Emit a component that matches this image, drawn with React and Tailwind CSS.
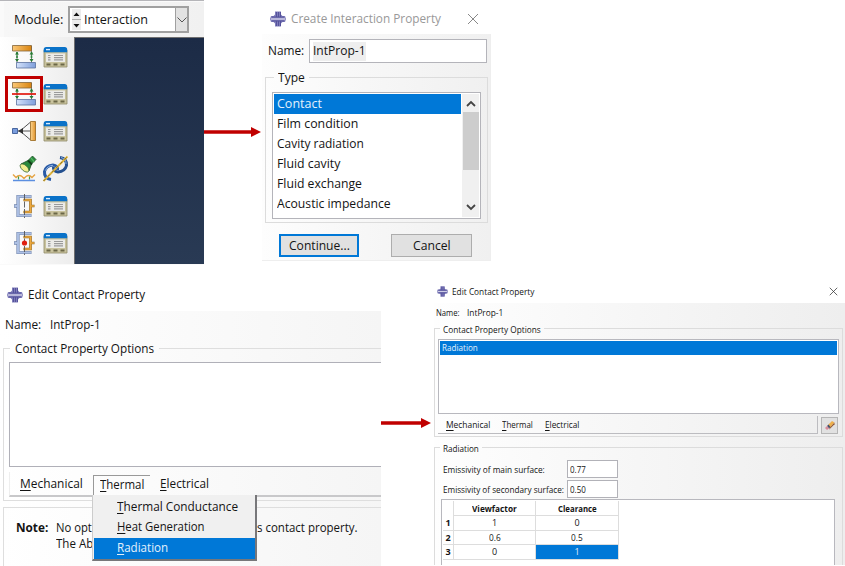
import { useLayoutEffect, useRef, useState } from "react";

/* Text run condensed or widened to an exact width. */
function T({ w, className = "", children }) {
  const ref = useRef(null);
  const [scale, setScale] = useState(1);
  useLayoutEffect(() => {
    setScale(w / ref.current.offsetWidth);
  }, [w]);
  return (
    <span className={`inline-block shrink-0 whitespace-nowrap ${className}`} style={{ width: w }}>
      <span ref={ref} className="inline-block origin-left" style={{ transform: `scaleX(${scale})` }}>
        {children}
      </span>
    </span>
  );
}

function Mnemonic({ text, w }) {
  return (
    <T w={w}>
      <span className="underline underline-offset-2">{text[0]}</span>
      {text.slice(1)}
    </T>
  );
}

function AppIcon({ className }) {
  return (
    <svg viewBox="0 0 16 16" className={className}>
      <path d="M5 .5h6v3l1.500 1.500H15l1 3-1 3h-2.500L11 12.500v3H5v-3L3.500 11H1L0 8l1-3h2.500L5 3.500z" fill="#807eba" />
      <path d="M6.500 1v5M8.500 1v5M10.500 1v5M6.500 10v5M8.500 10v5M10.500 10v5" stroke="#55529c" strokeWidth="1" />
      <path d="M2 6h12M2 10h12" stroke="#55529c" strokeWidth="1.200" />
      <path d="M1 8h14" stroke="#f1f0fa" strokeWidth="1" />
    </svg>
  );
}

function CloseIcon({ className }) {
  return (
    <svg viewBox="0 0 12 12" className={className} fill="none" stroke="currentColor">
      <path d="M1 1l10 10M11 1L1 11" />
    </svg>
  );
}

function Arrow({ width }) {
  return (
    <svg width={width} height="12" viewBox={`0 0 ${width} 12`} className="block">
      <path d={`M0 6H${width - 9}`} stroke="#c00000" strokeWidth="3.4" />
      <path d={`M${width - 10} 1L${width} 6l-${10} 5z`} fill="#c00000" />
    </svg>
  );
}

function ManagerIcon() {
  return (
    <svg width="25" height="22" viewBox="0 0 25 22">
      <path d="M1 4h23v17H1z" fill="#c8c29d" stroke="#8f8a68" strokeWidth=".8" />
      <path d="M.700 3.500q0-2.500 2.500-2.500h18.500q2.500 0 2.500 2.500V6.200H.700z" fill="#0a72c8" />
      <path d="M3 3.600h4" stroke="#d8ecff" strokeWidth="1.400" />
      <path d="M3 7.500h19v8.500H3z" fill="#ebebe8" />
      <path d="M5 9.500h2.500M5 11.700h2.500M5 13.900h2.500M11 9.500h9M11 11.700h9M11 13.900h9" stroke="#9a9a9a" strokeWidth="1.200" />
      <path d="M3.500 17.500h4v2h-4zM10.500 17.500h4v2h-4zM17.500 17.500h4v2h-4z" fill="#6b6747" />
    </svg>
  );
}

function InteractionIcon({ crossed }) {
  return (
    <svg width="26" height="26" viewBox="0 0 26 26">
      <defs>
        <linearGradient id="or">
          <stop offset="0" stopColor="#fbc877" />
          <stop offset="1" stopColor="#d98410" />
        </linearGradient>
        <linearGradient id="bl">
          <stop offset="0" stopColor="#d3e1fa" />
          <stop offset="1" stopColor="#7f9fdb" />
        </linearGradient>
      </defs>
      <path d="M6 8v11M20.500 2v19" stroke="#777" strokeWidth="1" />
      <path d="M1.500 1.500h19v5.500h-19z" fill="url(#or)" stroke="#83643a" strokeWidth=".8" />
      <path d="M5.500 18.500h19V24h-19z" fill="url(#bl)" stroke="#5c719e" strokeWidth=".8" />
      <path d="M6 8v9M20.500 8v9" stroke="#2e8a3b" strokeDasharray="2.500 1" strokeWidth="1.600" />
      <path d="M4 10.500L6 8l2 2.500zM4 15l2 2.800L8 15zM18.500 10.500l2-2.500 2 2.500zM18.500 15l2 2.800 2-2.800z" fill="#257a32" />
      {crossed && <path d="M1 13h24" stroke="#e2231a" strokeWidth="1.800" />}
    </svg>
  );
}

function ConstraintIcon() {
  return (
    <svg width="26" height="24" viewBox="0 0 26 24">
      <defs>
        <linearGradient id="plate">
          <stop offset="0" stopColor="#fcd590" />
          <stop offset="1" stopColor="#e0922a" />
        </linearGradient>
      </defs>
      <path d="M19.500 2.500h5v19h-5z" fill="url(#plate)" stroke="#95651b" strokeWidth=".8" />
      <path d="M9 12L19 3.500M7 12h12M9 12l10 8.500" stroke="#555" strokeWidth="1" fill="none" />
      <path d="M12 9L7 12l5 3z" fill="#333" />
      <path d="M1.500 9.500h5v5h-5z" fill="#7a9ddd" stroke="#49679f" />
    </svg>
  );
}

function FlashlightIcon() {
  return (
    <svg width="26" height="28" viewBox="0 0 26 28">
      <path d="M10 9l7-3.500L21.500 1 25 4.500l-4.500 4.500-2.500 7z" fill="#2a8a3c" stroke="#1c4a23" strokeWidth=".8" />
      <path d="M17 5.500l4 4" stroke="#133b19" strokeWidth="1.800" />
      <path d="M20 3l3.500 4" stroke="#56b566" strokeWidth="1.200" />
      <ellipse cx="13.500" cy="13" rx="5.300" ry="2.800" transform="rotate(42 13.500 13)" fill="#f3ee90" stroke="#3c6b37" strokeWidth=".8" />
      <path d="M2 19.500l3 3q3-3.500 6-1l2 2 2-2q3-2.500 6 1l3-3" stroke="#e6a342" strokeWidth="1.400" fill="none" />
      <path d="M7.500 21.500v3M18.500 21.500v3" stroke="#3f9a4a" strokeWidth="1.200" />
      <path d="M2 25.500h22" stroke="#5b8fe0" strokeWidth="1.500" />
    </svg>
  );
}

function LinksIcon() {
  return (
    <svg width="27" height="27" viewBox="0 0 27 27" fill="none">
      <path d="M9 24.500Q2 23.500 2.500 16.500 4 10.500 11 10q5 .5 4.500 5" stroke="#2a5ba6" strokeWidth="3" />
      <path d="M18 2.500q7 1 6.500 8-1.500 6-8.500 6.500-5-.5-4.500-5" stroke="#24508f" strokeWidth="3" />
      <path d="M3.500 15.500Q5.500 10.500 11 10.300M24 9q.5-5-5-6.500" stroke="#8fb0de" strokeWidth="1" />
      <path d="M1.500 26L25.500 1.500" stroke="#e5b83a" strokeWidth="1.800" />
      <path d="M1.500 26L25.500 1.500" stroke="#6b5c2a" strokeWidth=".8" strokeDasharray="3 3" />
    </svg>
  );
}

function ConnectorIcon({ dot }) {
  return (
    <svg width="22" height="24" viewBox="0 0 22 24" fill="none">
      <path d="M18.500 2.500H5v19h13.500" stroke="#7286ad" strokeWidth="3.200" />
      <path d="M1 12h3" stroke="#7286ad" strokeWidth="3.500" />
      <path d="M18 2.500H5v19h13M1.500 12H5" stroke="#adc0e4" strokeWidth="1.900" />
      <path d="M10.500 6h7v12h-7M18 12h3.500" stroke="#93691f" strokeWidth="2.600" />
      <path d="M10.500 6h7v12h-7M18 12h3" stroke="#eda93f" strokeWidth="1.500" />
      <path d="M11.500 0v24" stroke="#555" strokeWidth=".9" strokeDasharray="6 1.500" />
      {dot && <circle cx="11.500" cy="12" r="2.600" fill="#e02010" />}
    </svg>
  );
}

function EraserIcon() {
  return (
    <svg width="11" height="11" viewBox="0 0 11 11">
      <path d="M4 5l4-4 2.500 1.500L6 7.500z" fill="#eeb04c" />
      <path d="M3 6l1.500-1.500L6.500 7 5 8.500z" fill="#455069" />
      <path d="M1 8l2-2 2 2.500L3 10z" fill="#d98b9b" />
      <path d="M6 7.500l4.500-5v1.700L5 9.700z" fill="#8e5533" />
    </svg>
  );
}

function ToolRow({ icon }) {
  return (
    <div className="flex h-[37.200px] items-center">
      <div className="flex w-[37px] justify-center">{icon}</div>
      <div className="pl-px">
        <ManagerIcon />
      </div>
    </div>
  );
}

function ModulePanel() {
  return (
    <section className="flex h-[265px] w-[204px] flex-col border-t border-[#b5b5b9] bg-[#fafafa] text-[13px]">
      <header className="mt-px ml-1 flex h-[35px] items-center bg-gradient-to-r from-[#f7f7f7] to-[#f1f1f1] pl-[10px]">
        <T w={49}>Module:</T>
        <div className="ml-[5px] flex h-[27px] w-[121px] items-center border-2 border-[#a0a0a0] bg-white">
          <div className="ml-[2px] flex h-[21px] w-[9px] flex-col bg-[#ececec]">
            <svg width="9" height="21" viewBox="0 0 9 21">
              <path d="M1.500 7l3-3.500 3 3.500zM1.500 15l3 3.500 3-3.500z" fill="#111" />
              <path d="M0 10.500h9" stroke="#b0b0b0" />
            </svg>
          </div>
          <T w={64} className="ml-[3px]">Interaction</T>
          <div className="ml-auto flex h-full w-[12px] items-center justify-center border-l border-[#a0a0a0] bg-[#e2e2e2]">
            <svg width="10" height="6" viewBox="0 0 10 6" fill="none" stroke="#555">
              <path d="M.5 .5L5 5 9.500 .5" />
            </svg>
          </div>
        </div>
      </header>
      <div className="flex h-[227px]">
        <div className="w-[74px] bg-gradient-to-r from-white to-[#ededed] pt-[1.500px] pl-[5px]">
          <ToolRow icon={<InteractionIcon />} />
          <div className="flex h-[37.200px] items-center">
            <div className="flex h-[36px] w-[38px] items-center justify-center border-3 border-[#c00000] pr-px">
              <InteractionIcon crossed />
            </div>
            <ManagerIcon />
          </div>
          <ToolRow icon={<ConstraintIcon />} />
          <div className="flex h-[37.200px] items-center">
            <div className="flex w-[37px] justify-center">
              <FlashlightIcon />
            </div>
            <LinksIcon />
          </div>
          <ToolRow icon={<ConnectorIcon />} />
          <ToolRow icon={<ConnectorIcon dot />} />
        </div>
        <div className="flex-1 border-t border-l border-[#6f6f70] bg-gradient-to-b from-[#1c2b46] to-[#293a54]" />
      </div>
    </section>
  );
}

const propertyTypes = [
  ["Contact", 45],
  ["Film condition", 81],
  ["Cavity radiation", 87],
  ["Fluid cavity", 63],
  ["Fluid exchange", 85],
  ["Acoustic impedance", 114],
];

function CreateDialog() {
  return (
    <section className="flex h-[261px] w-[229px] flex-col text-[12.500px]">
      <header className="flex h-[34px] items-center pt-[3px] pl-[8px] text-[#999]">
        <AppIcon className="size-[16px]" />
        <T w={150} className="mt-px ml-[5px]">Create Interaction Property</T>
        <CloseIcon className="ml-[26px] size-[12px] text-[#888]" />
      </header>
      <div className="flex flex-1 flex-col border-r border-b border-[#eee] bg-gradient-to-r from-[#fdfdfd] to-[#f0f0f0] pl-[3px]">
        <div className="mt-[5px] flex h-[24px] items-center pl-[3px]">
          <T w={36} className="mt-px">Name:</T>
          <div className="ml-[5px] flex h-[24px] w-[178px] items-center border border-[#b4b4ba] bg-white pt-px pl-[3px]">
            <T w={53} className="bg-[#eee]">IntProp-1</T>
          </div>
        </div>
        <fieldset className="mt-[6px] h-[154px] w-[222px] border border-[#dcdcdc] px-[6px]">
          <legend className="ml-[2px] flex h-[16px] items-center px-[4px] pt-[2px]">
            <T w={27}>Type</T>
          </legend>
          <div className="mt-[7px] flex h-[127px] w-[209px] justify-between border border-[#b4b4ba] bg-white p-px">
            <ul className="w-[187px]">
              {propertyTypes.map(([name, w], i) => (
                <li
                  key={name}
                  className={`flex h-[20px] items-center pt-px pl-[3px] ${i === 0 ? "bg-[#0078d7] text-[#e3f1fc]" : ""}`}
                >
                  <T w={w}>{name}</T>
                </li>
              ))}
            </ul>
            <div className="flex w-[17px] flex-col items-center bg-[#f0f0f0]">
              <svg width="10" height="18" viewBox="0 0 10 18" fill="none" stroke="#444" strokeWidth="1.800">
                <path d="M1 12l4-4 4 4" />
              </svg>
              <div className="h-[58px] w-[16px] bg-[#cdcdcd]" />
              <svg width="10" height="18" viewBox="0 0 10 18" fill="none" stroke="#444" strokeWidth="1.800" className="mt-auto">
                <path d="M1 6l4 4 4-4" />
              </svg>
            </div>
          </div>
        </fieldset>
        <div className="mt-[11px] ml-[14px] flex gap-[32px]">
          <button className="flex h-[23px] w-[80px] items-center justify-center border-2 border-[#0078d7] bg-[#e1e1e1] pt-px">
            <T w={61}>Continue...</T>
          </button>
          <button className="flex h-[23px] w-[81px] items-center justify-center border border-[#adadad] bg-[#e1e1e1] pt-px">
            <T w={38}>Cancel</T>
          </button>
        </div>
      </div>
    </section>
  );
}

function ThermalMenu() {
  return (
    <div className="absolute top-[19px] -left-[2px] z-10 flex h-[66px] w-[165px] flex-col border-r-2 border-b-2 border-l border-[#77777a] border-l-[#ccc] bg-[#f0f0f0] pt-[2px]">
      <div className="flex h-[20.500px] items-center pt-px pl-[24px]">
        <Mnemonic text="Thermal Conductance" w={121} />
      </div>
      <div className="flex h-[20.500px] items-center pt-px pl-[24px]">
        <Mnemonic text="Heat Generation" w={88} />
      </div>
      <div className="ml-px flex h-[21px] items-center bg-[#0078d7] pl-[23px] text-[#e3f1fc]">
        <Mnemonic text="Radiation" w={51} />
      </div>
    </div>
  );
}

function EditDialogLeft() {
  return (
    <section className="flex h-[284px] w-[381px] flex-col overflow-hidden text-[12.500px]">
      <header className="flex h-[29px] shrink-0 items-center pb-[3px] pl-[7px]">
        <AppIcon className="size-[16px]" />
        <T w={117} className="ml-[5px]">Edit Contact Property</T>
      </header>
      <div className="flex flex-1 flex-col bg-gradient-to-r from-white to-[#f5f5f5] pl-[3px]">
        <div className="flex h-[28px] items-center pt-px pl-[2px]">
          <T w={36}>Name:</T>
          <T w={51} className="ml-[9px]">IntProp-1</T>
        </div>
        <fieldset className="h-[162px] border border-r-0 border-[#dedede] pl-[5px]">
          <legend className="ml-px flex h-[18px] items-center px-[5px] pt-[2px]">
            <T w={139}>Contact Property Options</T>
          </legend>
          <div className="mt-[5px] h-[105px] border border-r-0 border-[#b0b0b8] bg-white" />
          <div className="mt-[5px] flex h-[25px] items-center border-b-2 border-l border-[#c8c8ca] border-l-[#eee] pt-[2px] pl-[10px]">
            <Mnemonic text="Mechanical" w={63} />
            <div className="relative ml-[10px] flex h-[20px] w-[57px] items-center border-t border-l border-[#999] pt-px pl-[6px]">
              <Mnemonic text="Thermal" w={44} />
              <ThermalMenu />
            </div>
            <div className="ml-[10px]">
              <Mnemonic text="Electrical" w={49} />
            </div>
          </div>
        </fieldset>
        <div className="mt-[6px] flex h-[64px] border-t border-l border-[#dedede] pt-[12px] pl-[12px] leading-[16px]">
          <T w={32} className="font-bold">Note:</T>
          <div className="ml-[8px] flex w-[201px] flex-col">
            <T w={36}>No opt</T>
            <T w={37}>The Ab</T>
          </div>
          <T w={101}>s contact property.</T>
        </div>
      </div>
    </section>
  );
}

const tableRows = [
  ["1", "1", "0"],
  ["2", "0.6", "0.5"],
  ["3", "0", "1"],
];

const glyphWidth = (text) => (text.length > 1 ? 12 : 5);

function RadiationTable() {
  return (
    <div className="ml-[6px] h-[66px] w-[394px] border border-b-0 border-[#b8b8be] bg-white pt-px pl-px">
      <div className="grid h-[15px] w-[176px] grid-cols-[11px_82px_83px] font-bold">
        <div className="border-r border-[#ddd]" />
        <div className="flex items-center justify-center border-r border-b border-[#ddd] pt-px">
          <T w={45}>Viewfactor</T>
        </div>
        <div className="flex items-center justify-center border-r border-b border-[#ddd] pt-px">
          <T w={39}>Clearance</T>
        </div>
      </div>
      {tableRows.map(([n, v, c]) => (
        <div key={n} className="grid h-[14.600px] w-[176px] grid-cols-[11px_82px_83px]">
          <div className="flex items-center justify-center border-r border-b border-[#ddd] pt-px font-bold">
            <T w={5}>{n}</T>
          </div>
          <div className="flex items-center justify-center border-r border-b border-[#ddd] pt-px">
            <T w={glyphWidth(v)}>{v}</T>
          </div>
          <div
            className={`flex items-center justify-center border-r border-b border-[#ddd] pt-px ${n === "3" ? "bg-[#0078d7] text-[#e3f1fc]" : ""}`}
          >
            <T w={glyphWidth(c)}>{c}</T>
          </div>
        </div>
      ))}
    </div>
  );
}

function EmissivityField({ label, w, value }) {
  return (
    <div className="flex h-[20px] items-center pl-[8px]">
      <div className="w-[124px] pt-px">
        <T w={w}>{label}</T>
      </div>
      <div className="flex h-[18px] w-[51px] items-center border border-[#b2b2b8] bg-white pt-px pl-[2px]">
        <T w={16}>{value}</T>
      </div>
    </div>
  );
}

function EditDialogRight() {
  return (
    <section className="flex h-[284px] w-[411px] flex-col overflow-hidden text-[9px] leading-[12px]">
      <header className="flex h-[21px] items-center pb-[2px] pl-[3px]">
        <AppIcon className="size-[11px]" />
        <T w={82} className="ml-[4px]">Edit Contact Property</T>
        <CloseIcon className="mr-[7px] ml-auto size-[9px] text-[#333]" />
      </header>
      <div className="flex h-[262px] flex-col bg-gradient-to-r from-[#fefefe] to-[#eeeeee]">
        <div className="flex h-[19px] items-center pl-[2px]">
          <T w={24}>Name:</T>
          <T w={36} className="ml-[7px]">IntProp-1</T>
        </div>
        <fieldset className="h-[115px] w-[409px] border border-[#dcdcdc] pl-[3px]">
          <legend className="ml-[2px] flex h-[13px] items-center px-[3px] pt-[2px]">
            <T w={98}>Contact Property Options</T>
          </legend>
          <div className="mt-[4px] h-[75px] w-[401px] border border-[#b8b8be] bg-white p-px">
            <div className="flex h-[14px] items-center bg-[#0078d7] pl-[2px] text-[#e3f1fc]">
              <T w={36}>Radiation</T>
            </div>
          </div>
          <div className="mt-[2px] flex w-[401px] items-center justify-between">
            <div className="flex h-[18px] w-[380px] items-center gap-[12px] border-r border-b border-[#bcbcc0] pt-px pl-[8px]">
              <Mnemonic text="Mechanical" w={44} />
              <Mnemonic text="Thermal" w={31} />
              <Mnemonic text="Electrical" w={34} />
            </div>
            <div className="mr-px flex size-[17px] items-center justify-center border border-[#b5b5b5] bg-[#e1e1e1]">
              <EraserIcon />
            </div>
          </div>
        </fieldset>
        <fieldset className="mt-[4px] h-[124px] w-[409px] border border-b-0 border-[#dcdcdc]">
          <legend className="ml-[5px] flex h-[13px] items-center px-[3px] pt-[2px]">
            <T w={36}>Radiation</T>
          </legend>
          <div className="pt-[5px]">
            <EmissivityField label="Emissivity of main surface:" w={102} value="0.77" />
            <EmissivityField label="Emissivity of secondary surface:" w={121} value="0.50" />
          </div>
          <RadiationTable />
        </fieldset>
      </div>
    </section>
  );
}

export default function App() {
  return (
    <main className="flex h-[566px] w-[845px] flex-col overflow-hidden bg-white font-['Open_Sans','Noto_Sans',sans-serif] text-[#141414]">
      <div className="flex h-[282px]">
        <ModulePanel />
        <div className="w-[58px] pt-[126px]">
          <Arrow width={57} />
        </div>
        <CreateDialog />
      </div>
      <div className="flex h-[284px]">
        <EditDialogLeft />
        <div className="w-[53px] pt-[135px]">
          <Arrow width={50} />
        </div>
        <EditDialogRight />
      </div>
    </main>
  );
}
